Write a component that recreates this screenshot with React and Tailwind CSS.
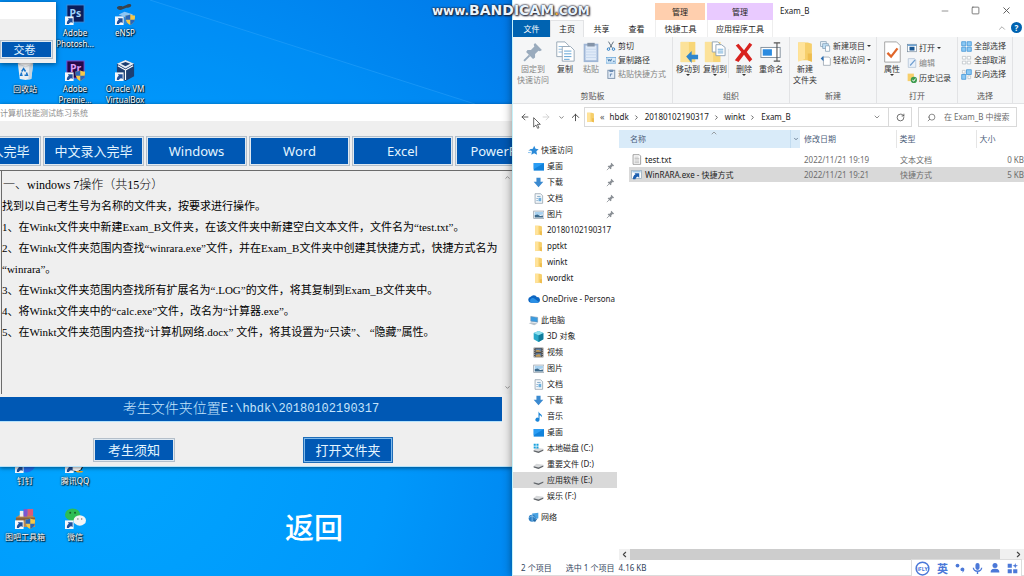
import { useState } from 'react'
import clsx from 'clsx'
import {
  ArrowLeft, ArrowRight, ArrowUp, ChevronDown, ChevronLeft, ChevronRight, ChevronUp,
  Minus, RotateCw, Search, Square, X
} from 'lucide-react'

const UI_FONT = "font-['Noto_Sans','Noto_Sans_CJK_SC',sans-serif]"

/* ---------- 图标 ---------- */

function Svg({ size = 'size-[11px]', box = 16, children }) {
  return (
    <svg viewBox={`0 0 ${box} ${box}`} className={clsx(size, 'shrink-0')} fill="none" aria-hidden="true">
      {children}
    </svg>
  )
}

const FolderIcon = ({ size }) => (
  <Svg size={size}>
    <path d="M3 1h7l3 1v13l-3-1H3z" fill="#f6cf6b" />
    <path d="M3 1h5v12l-5 2z" fill="#ffe39a" />
    <path d="M10 9h3v6l-3-1z" fill="#eebd4f" />
  </Svg>
)

const PinIcon = ({ size, color = '#8b9096' }) => (
  <Svg size={size}>
    <path d="M9.5 1.5 14.5 6.5 13 7.5 12 7 9.5 9.5 9.5 12 8 13 3 8 4 6.5 6.5 6.5 9 4 8.5 2.8z" fill={color} />
    <path d="M5.5 10.5 1.5 14.5" stroke={color} strokeWidth="1.4" />
  </Svg>
)

const StarIcon = () => (
  <Svg>
    <path d="M9 1l2 4.5 4.5.5-3.3 3 1 5L9 12l-4.2 2.3.9-4.8L2 6l5-.5z" fill="#2b8ad8" />
    <path d="M1 8h4M0 11h4" stroke="#74b6e8" strokeWidth="1.2" />
  </Svg>
)

const DesktopIcon = () => (
  <Svg>
    <rect x="1" y="3" width="15" height="11" fill="#1283dc" />
    <path d="M1 3h15L1 12z" fill="#2a9df4" />
  </Svg>
)

const DownIcon = () => (
  <Svg>
    <path d="M5 1h6v6h4l-7 8-7-8h4z" fill="#3b8ad0" />
  </Svg>
)

const DocIcon = () => (
  <Svg>
    <path d="M3 1h8l3 3v11H3z" fill="#f4f7fa" stroke="#8897a5" />
    <path d="M6 5h5M5 8h2M5 11h2" stroke="#5b8cb5" />
    <rect x="8" y="7" width="4" height="5" fill="#6aaede" />
  </Svg>
)

const PictureIcon = () => (
  <Svg>
    <rect x="1" y="3" width="15" height="11" fill="#f5f8fa" stroke="#8d9aa6" />
    <path d="M2.5 4.500h12V8l-12 2z" fill="#a9d2f0" />
    <path d="M2.500 12.500V9l4-1 4 2 4-.5v3z" fill="#3c6a8c" />
  </Svg>
)

const CloudIcon = () => (
  <Svg size="size-[12px]">
    <path d="M4 13a4 4 0 0 1-.5-7.900A5 5 0 0 1 12 5.500 3.800 3.800 0 0 1 13 13z" fill="#0d66c2" />
    <path d="M4 13a3.500 3.500 0 0 1 1-6c3-1 5 2 9.500 5-.4.6-1 1-1.500 1z" fill="#2a90e6" />
  </Svg>
)

const PcIcon = () => (
  <Svg>
    <path d="M4 2l10 1.500v7L4 9z" fill="#3a9be0" stroke="#6f8ea8" strokeWidth=".8" />
    <path d="M1 12l4-1.500 9 2-5 2.500z" fill="#b9c3cc" />
  </Svg>
)

const CubeIcon = () => (
  <Svg>
    <path d="M8 0l7 3v9l-7 4-7-4V3z" fill="#29a9c9" />
    <path d="M8 6l7-3v9l-7 4z" fill="#127c9b" />
    <path d="M1 3l7-3 7 3-7 3z" fill="#8fe0ee" />
  </Svg>
)

const VideoIcon = () => (
  <Svg>
    <rect x="1" y="1" width="14" height="14" fill="#4a4a4a" />
    <path d="M2.500 1v14M13.500 1v14" stroke="#ddd" strokeWidth="1.200" strokeDasharray="1.500 1.500" />
    <path d="M4 2h8v5H4zM4 9h8v5H4z" fill="#5d7fa6" />
    <path d="M4 5l4-1 4 3H4zM4 12l5-2 3 4H4z" fill="#c49a55" />
  </Svg>
)

const MusicIcon = () => (
  <Svg>
    <path d="M8 0c0 4 6 4 5 9-.8-2-2-3-3.500-3v6.500A3 3 0 1 1 8 10z" fill="#1a85d8" />
  </Svg>
)

const DriveIcon = ({ system }) => (
  <Svg>
    <path d="M1 10l4-3 10 1.500v2L8 14 1 12z" fill="#d7d9db" />
    <path d="M1 10.500l7 2 7-3v1.800L8 14.500 1 12.500z" fill="#63676b" />
    {system && <path d="M1 1h3v3H1zM5 1h3v3H5zM1 5h3v3H1zM5 5h3v3H5z" fill="#17a0dd" />}
  </Svg>
)

const NetworkIcon = () => (
  <Svg>
    <path d="M6 2l9-1v8l-8 2z" fill="#4aa3e2" />
    <circle cx="6" cy="9" r="5" fill="#2d7fc4" />
    <path d="M2 8c3-3 5-2 8 0M6 4v10" stroke="#9fd1f4" />
    <path d="M8 12l6-3-4 6z" fill="#2268a5" />
  </Svg>
)

const TextFileIcon = () => (
  <Svg>
    <path d="M3 1h9l2 2v12H3z" fill="#fff" stroke="#777" />
    <path d="M5 4.500h6M5 6.500h7M5 8.500h7M5 10.500h7M5 12.500h7" stroke="#999" strokeWidth=".8" />
  </Svg>
)

const LinkFileIcon = () => (
  <Svg>
    <rect x="1" y="2" width="14" height="12" fill="#fff" stroke="#8aa4b8" />
    <path d="M2 3h12v2H2z" fill="#9cc4e4" />
    <path d="M3 15c-.5-4 1-6 3.500-7.500L5 6h7v7l-2-2c-2 1-3 2-3.500 4z" fill="#1c5fb0" />
  </Svg>
)

/* 功能区大图标 */

const CopyIcon = () => (
  <Svg size="size-[22px]" box={24}>
    <path d="M3 1h9l4 4v12H3z" fill="#fff" stroke="#95a5b5" />
    <path d="M5 6h7M5 9h7M5 12h7" stroke="#86b5da" />
    <path d="M9 6h9l4 4v12H9z" fill="#fff" stroke="#95a5b5" />
    <path d="M11 11h8M11 14h8M11 17h8M11 20h6" stroke="#579dd1" />
  </Svg>
)

const PasteIcon = () => (
  <Svg size="size-[22px]" box={24}>
    <rect x="4" y="3" width="16" height="20" fill="#9fb6d6" />
    <rect x="6" y="5" width="12" height="16" fill="#dfeaf8" />
    <path d="M6 9h12M6 12h12M6 15h12M6 18h12" stroke="#c5d7ee" />
    <path d="M8 2h8v4H8z" fill="#8494a8" />
  </Svg>
)

const MoveToIcon = () => (
  <Svg size="size-[22px]" box={24}>
    <path d="M4 1h16v22H4z" fill="#f8d677" />
    <path d="M4 1h9v22H4z" fill="#fce29a" />
    <path d="M10 17l6-6v4h7v5h-7v4z" fill="#2f86cd" />
  </Svg>
)

const CopyToIcon = () => (
  <Svg size="size-[22px]" box={24}>
    <path d="M1 1h17v22H1z" fill="#f8d677" />
    <path d="M1 1h9v22H1z" fill="#fce29a" />
    <path d="M9 1h6l3 3v8H9z" fill="#fff" stroke="#8ea2b5" />
    <path d="M13 4h6l4 3v9H13z" fill="#fff" stroke="#8ea2b5" />
    <path d="M15 9h6M15 11h6M15 13h6" stroke="#6aa9d8" />
  </Svg>
)

const DeleteIcon = () => (
  <Svg size="size-[22px]" box={24}>
    <path d="M3 5l3-2 6 7 6-8 3 2-6 8 6 8-3 3-6-8-6 8-4-2 7-9z" fill="#d8231f" />
  </Svg>
)

const RenameIcon = () => (
  <Svg size="size-[22px]" box={24}>
    <rect x="1" y="7" width="21" height="11" fill="#fff" stroke="#7f8d99" />
    <rect x="3" y="9" width="10" height="7" fill="#2b8be0" />
    <path d="M15 2h7M15 22h7M18.500 2v20" stroke="#555" strokeWidth="1.200" />
  </Svg>
)

const PropertiesIcon = () => (
  <Svg size="size-[22px]" box={24}>
    <path d="M4 1h13l4 4v18H4z" fill="#fff" stroke="#a0a0a0" />
    <path d="M7 13l4 4 7-9" stroke="#e0662a" strokeWidth="2.500" />
  </Svg>
)

/* 功能区小图标 */

const CutIcon = () => (
  <Svg size="size-[10px]">
    <path d="M4 1l6 10M12 1L6 11" stroke="#5b6b7a" strokeWidth="1.500" />
    <circle cx="4" cy="13" r="2" stroke="#2479c2" strokeWidth="1.500" />
    <circle cx="12" cy="13" r="2" stroke="#2479c2" strokeWidth="1.500" />
  </Svg>
)

const PathIcon = () => (
  <Svg size="size-[10px]">
    <rect x="0" y="4" width="16" height="9" fill="#d8ebfa" stroke="#4d94cf" />
    <path d="M3 6l1.500 4L6 7l1.500 3L9 6M11 10h3" stroke="#245e96" strokeWidth="1.200" />
  </Svg>
)

const PasteLinkIcon = () => (
  <Svg size="size-[10px]">
    <rect x="3" y="2" width="11" height="13" fill="#e4edf8" stroke="#7d93ac" strokeWidth="1.500" />
    <path d="M7 12V8h3M6 2h5v2H6z" stroke="#5f83ae" strokeWidth="1.500" />
  </Svg>
)

const NewItemIcon = () => (
  <Svg size="size-[11px]">
    <rect x="1" y="1" width="8" height="7" fill="#e8f1f8" stroke="#7b98b0" />
    <rect x="4" y="4" width="8" height="7" fill="#bfe0f5" stroke="#7b98b0" />
    <path d="M8 7h6v8H8z" fill="#fff" stroke="#7b98b0" />
  </Svg>
)

const EasyAccessIcon = () => (
  <Svg size="size-[11px]">
    <path d="M5 3h8l2 2v10H5z" fill="#fff" stroke="#8a97a3" />
    <path d="M1 5l4-4v8z" fill="#2b6fb5" />
  </Svg>
)

const OpenIcon = () => (
  <Svg size="size-[10px]">
    <rect x="1" y="2" width="14" height="12" fill="#fff" stroke="#6a7f92" />
    <path d="M1 3.500h14" stroke="#4f91cc" strokeWidth="2" />
    <rect x="4" y="6" width="8" height="6" fill="#1a5792" />
  </Svg>
)

const EditIcon = () => (
  <Svg size="size-[10px]">
    <path d="M2 1h10l2 2v12H2z" fill="#e9f1fa" stroke="#a4b7cb" />
    <path d="M5 12L13 3" stroke="#6f9ed0" strokeWidth="2" />
  </Svg>
)

const HistoryIcon = () => (
  <Svg size="size-[10px]">
    <path d="M1 1h10v12H1z" fill="#f6cf6b" />
    <circle cx="11" cy="11" r="5" fill="#3e9b4f" />
    <path d="M8.500 11.500L11 13l2.500-4" stroke="#fff" strokeWidth="1.500" />
  </Svg>
)

const SelectAllIcon = () => (
  <Svg size="size-[11px]">
    <path d="M1 1h6v6H1zM9 1h6v6H9zM1 9h6v6H1zM9 9h6v6H9z" fill="#8dc9f4" stroke="#2f8ad2" />
  </Svg>
)

const SelectNoneIcon = () => (
  <Svg size="size-[11px]">
    <path d="M2 2h5v4H2zM9 2h5v4H9zM2 9h5v4H2zM9 9h5v4H9z" fill="#fff" stroke="#b5bbc1" />
  </Svg>
)

const InvertIcon = () => (
  <Svg size="size-[11px]">
    <path d="M8 1h7v7H8zM1 8h6v7H1z" fill="#8dc9f4" stroke="#2f8ad2" />
    <path d="M2 2h4v4H2zM10 10h4v4h-4z" fill="#fff" stroke="#b5bbc1" />
  </Svg>
)

/* 桌面图标 */

const ShortcutArrow = () => (
  <>
    <rect x="0" y="13" width="9" height="9" fill="#f4f8fc" />
    <path d="M2 21c-.3-2 .5-3.500 2-4.500L3 15h5v5l-1.500-1C5 19.500 4.500 20 4 21z" fill="#1f4f9a" />
  </>
)

const Shield = () => (
  <>
    <path d="M16 11c2 1 3 1 5 1 0 5-1 8-5 10-4-2-5-5-5-10 2 0 3 0 5-1z" fill="#f4c84a" />
    <path d="M16 11c-2 1-3 1-5 1v4.500h5zM16 16.500h4.800c-.5 2.500-2 4.200-4.800 5.500z" fill="#2b66b8" />
  </>
)

const PhotoshopIcon = () => (
  <Svg size="size-[21px]" box={22}>
    <rect x="2" y="1" width="18" height="18" fill="#0a1d5c" stroke="#3b8fe0" />
    <text x="11" y="14" textAnchor="middle" fontSize="11" fontWeight="700" fill="#9cd2fb">Ps</text>
    <ShortcutArrow />
  </Svg>
)

const PremiereIcon = () => (
  <Svg size="size-[21px]" box={22}>
    <rect x="2" y="1" width="18" height="18" fill="#25084a" stroke="#7c4fd0" />
    <text x="11" y="13" textAnchor="middle" fontSize="11" fontWeight="700" fill="#dd9bf7">Pr</text>
    <Shield />
    <ShortcutArrow />
  </Svg>
)

const EnspIcon = () => (
  <Svg size="size-[21px]" box={22}>
    <path d="M2 4c0-2 4-2.500 6-1.500L12 1c2-1.500 5-1 5 .5S14 4 12 4L8 5.500C6 7 2 6 2 4z" fill="#39424c" />
    <path d="M4 11l6-3 9 3v6l-8 4-7-4z" fill="#2f8bdc" />
    <path d="M4 11l6-3 9 3-8 3z" fill="#8cc6f5" />
    <Shield />
    <ShortcutArrow />
  </Svg>
)

const RecycleIcon = () => (
  <Svg size="size-[21px]" box={22}>
    <path d="M3 4l8-3 8 3-2 16-6 1-6-1z" fill="#e8eef3" />
    <path d="M3 4l8-3 8 3-8 3z" fill="#fff" stroke="#c3ced8" strokeWidth=".6" />
    <path d="M15 6l4-2-2 16-3 .5z" fill="#c8d4de" />
    <path d="M7 12l2-3 2 3M12 13l1 3H10M8 16H6l1-3" stroke="#1673c9" strokeWidth="1.600" />
  </Svg>
)

const VirtualBoxIcon = () => (
  <Svg size="size-[21px]" box={22}>
    <path d="M11 0l9 4v13l-9 5-9-5V4z" fill="#1d3f72" />
    <path d="M11 0l9 4-9 5-9-5z" fill="#e7eef6" />
    <path d="M11 2l5 2-5 2.500L6 4z" fill="#1d3f72" />
    <path d="M3 6l8 4.500V21M19 6l-8 4.500" stroke="#fff" strokeWidth="1.200" />
    <ShortcutArrow />
  </Svg>
)

const DingIcon = () => (
  <Svg size="size-[21px]" box={22}>
    <circle cx="12" cy="12" r="9.500" fill="#1f6ff0" />
    <path d="M6 5l10 4-4 5 1-3-5-2z" fill="#fff" />
    <ShortcutArrow />
  </Svg>
)

const QqIcon = () => (
  <Svg size="size-[21px]" box={22}>
    <ellipse cx="12" cy="11" rx="8" ry="10" fill="#15181c" />
    <ellipse cx="12" cy="14" rx="6" ry="6" fill="#fff" />
    <path d="M11 20h8l-1 1.500h-5z" fill="#f0a51e" />
    <ShortcutArrow />
  </Svg>
)

const ToolboxIcon = () => (
  <Svg size="size-[21px]" box={22}>
    <path d="M1 10l4-3h12l4 3v10H1z" fill="#b98a55" />
    <path d="M1 10h20v3H1z" fill="#8b6238" />
    <path d="M5 3h4v6H5z" fill="#eee" />
    <path d="M9 1h4v8H9z" fill="#8055cf" />
    <path d="M13 1h6v7h-6z" fill="#dc5b78" />
    <Shield />
    <ShortcutArrow />
  </Svg>
)

const WechatIcon = () => (
  <Svg size="size-[21px]" box={22}>
    <ellipse cx="8" cy="7" rx="8" ry="6.500" fill="#2dbd55" />
    <circle cx="5.500" cy="5" r="1" fill="#115f28" />
    <circle cx="10.500" cy="5" r="1" fill="#115f28" />
    <ellipse cx="15.500" cy="13" rx="6.500" ry="5.500" fill="#f2f4f5" />
    <circle cx="13.500" cy="11.500" r=".8" fill="#777" />
    <circle cx="17.500" cy="11.500" r=".8" fill="#777" />
    <ShortcutArrow />
  </Svg>
)

/* ---------- 桌面 ---------- */

const desktopIcons = [
  { lines: ['Adobe', 'Photosh...'], icon: PhotoshopIcon, place: 'col-start-2 row-start-1' },
  { lines: ['eNSP'], icon: EnspIcon, place: 'col-start-3 row-start-1' },
  { lines: ['回收站'], icon: RecycleIcon, place: 'col-start-1 row-start-2' },
  { lines: ['Adobe', 'Premie...'], icon: PremiereIcon, place: 'col-start-2 row-start-2' },
  { lines: ['Oracle VM', 'VirtualBox'], icon: VirtualBoxIcon, place: 'col-start-3 row-start-2' },
  { lines: ['钉钉'], icon: DingIcon, place: 'col-start-1 row-start-9' },
  { lines: ['腾讯QQ'], icon: QqIcon, place: 'col-start-2 row-start-9' },
  { lines: ['图吧工具箱'], icon: ToolboxIcon, place: 'col-start-1 row-start-10' },
  { lines: ['微信'], icon: WechatIcon, place: 'col-start-2 row-start-10' }
]

function DesktopIcons() {
  return (
    <div className="grid grid-cols-[repeat(3,50px)] grid-rows-[repeat(10,56px)] pt-1">
      {desktopIcons.map(({ lines, icon: Icon, place }) => (
        <button key={lines.join('')} className={clsx('flex flex-col items-center gap-[2px]', place)}>
          <Icon />
          <span className="whitespace-nowrap text-[8px] leading-[11px] text-white [text-shadow:0_0_2px_#000,1px_1px_1px_#000]">
            {lines.map((line) => <span key={line} className="block">{line}</span>)}
          </span>
        </button>
      ))}
    </div>
  )
}

/* ---------- 考试窗口 ---------- */

const examTabs = ['英文录入完毕', '中文录入完毕', 'Windows', 'Word', 'Excel', 'PowerPoint']

const questions = [
  '找到以自己考生号为名称的文件夹，按要求进行操作。',
  '1、在Winkt文件夹中新建Exam_B文件夹，在该文件夹中新建空白文本文件，文件名为“test.txt”。',
  '2、在Winkt文件夹范围内查找“winrara.exe”文件，并在Exam_B文件夹中创建其快捷方式，快捷方式名为\n“winrara”。',
  '3、在Winkt文件夹范围内查找所有扩展名为“.LOG”的文件，将其复制到Exam_B文件夹中。',
  '4、将Winkt文件夹中的“calc.exe”文件，改名为“计算器.exe”。',
  '5、在Winkt文件夹范围内查找“计算机网络.docx” 文件，将其设置为“只读”、 “隐藏”属性。'
]

const BLUE_BUTTON = 'border border-[#b4bfca] bg-[#0058b4] text-[#e4f5ff] outline-1 -outline-offset-2 outline-[#dfe9f2]'

function SubmitWindow() {
  return (
    <section className="absolute left-0 top-[2px] w-14 bg-[#efefef] pb-[3px] shadow-[0_1px_5px_rgba(0,0,0,0.5)]">
      <div className="h-[17px] bg-white" />
      <div className="pr-[3px] pt-[17px]">
        <button className={clsx('h-[19px] w-full pr-1 text-[11px] leading-[13px]', BLUE_BUTTON)}>交卷</button>
      </div>
    </section>
  )
}

function ExamWindow() {
  const [tab, setTab] = useState('Windows')

  return (
    <section className="absolute inset-x-0 top-[104px] overflow-hidden border-b border-[#b5e2fb] bg-[#efefef] shadow-[0_1px_4px_rgba(0,0,0,0.5)]">
      <h1 className="h-[17px] bg-white text-[8px] leading-[17px] text-[#909090]">计算机技能测试练习系统</h1>

      {/* 科目标签 */}
      <nav className="-ml-[60px] flex gap-[2px] pt-[15px]">
        {examTabs.map((name) => (
          <button
            key={name}
            onClick={() => setTab(name)}
            aria-pressed={tab === name}
            className={clsx('h-[30px] w-[101px] shrink-0 text-[13px] leading-[26px]', BLUE_BUTTON)}
          >
            {name}
          </button>
        ))}
      </nav>

      {/* 题目 */}
      <div className="mt-1 flex h-[224px] border-t border-[#6b6b6b]">
        <article className="ml-px min-w-0 flex-1 border-l border-[#6b6b6b] pt-1 font-['Liberation_Serif','Noto_Sans_CJK_SC',serif] text-[11px] leading-[21px] text-black">
          <h2 className="pl-px text-[12px] font-light">一、windows 7操作（共15分）</h2>
          {questions.map((text) => <p key={text} className="whitespace-pre-line font-normal">{text}</p>)}
        </article>
        <div className="flex w-[10px] flex-col items-center justify-between bg-[#ededed] py-[3px] text-[#8a8a8a]">
          <ChevronUp className="size-[7px]" strokeWidth={3} />
          <ChevronDown className="size-[7px]" strokeWidth={3} />
        </div>
      </div>

      <p className="mr-[10px] mt-[3px] flex h-[25px] items-center justify-center border-b border-[#b5e2fb] bg-[#0058b4] font-['Liberation_Mono','Noto_Sans_CJK_SC',monospace] text-[12px] font-light text-[#c4e4fb]">
        <span className="text-[14px]">考生文件夹位置</span>E:\hbdk\20180102190317
      </p>

      <div className="flex items-center pb-[3px] pl-[93px] pt-[15px]">
        <button className={clsx('h-6 w-[82px] text-[13px] leading-5', BLUE_BUTTON)}>考生须知</button>
        <button className="ml-32 h-[26px] w-[90px] border border-[#1f6db8] bg-[#0058b4] text-[13px] leading-5 text-[#e4f5ff] outline-1 -outline-offset-2 outline-[#7fb9ea]">
          打开文件夹
        </button>
      </div>
    </section>
  )
}

function Desktop() {
  return (
    <main className="relative w-1/2 overflow-hidden bg-[radial-gradient(ellipse_at_20%_75%,#00a6ff_0%,#0098fb_50%,#0078e8_100%)]">
      <svg viewBox="0 0 512 104" className="absolute inset-x-0 top-0 h-[104px] w-full" preserveAspectRatio="none" aria-hidden="true">
        <path d="M150 0 475 104H0V0z" fill="#009bff" opacity=".18" />
        <path d="M150 0 475 104" stroke="#3fb0ff" strokeWidth="1" opacity=".35" />
      </svg>
      <div className="relative"><DesktopIcons /></div>
      <SubmitWindow />
      <ExamWindow />
      <button className="absolute left-[285px] top-[508px] text-[29px] font-medium leading-10 text-white">返回</button>
    </main>
  )
}

/* ---------- 资源管理器 ---------- */

function BigButton({ icon, lines, width, disabled, menu }) {
  return (
    <button className={clsx('flex shrink-0 flex-col items-center pt-1', width, disabled ? 'text-[#858585]' : 'text-[#333]')}>
      {icon}
      {lines.map((line) => <span key={line} className="whitespace-nowrap leading-[11px]">{line}</span>)}
      {menu && <Caret />}
    </button>
  )
}

const Caret = () => (
  <svg viewBox="0 0 4 2" className="h-[2px] w-1 shrink-0" aria-hidden="true"><path d="M0 0h4L2 2z" fill="#333" /></svg>
)

function SmallButton({ icon: Icon, label, disabled, menu, tall }) {
  return (
    <button className={clsx('flex items-center gap-[2px] whitespace-nowrap', tall ? 'h-[15px]' : 'h-[14px]', disabled ? 'text-[#858585]' : 'text-[#333]')}>
      <Icon />
      {label}
      {menu && <Caret />}
    </button>
  )
}

function RibbonGroup({ label, width, children }) {
  return (
    <div className={clsx('flex shrink-0 flex-col border-r border-[#e2e3e5]', width)}>
      <div className="flex h-[53px]">{children}</div>
      <div className="pb-[2px] text-center leading-[11px] text-[#555]">{label}</div>
    </div>
  )
}

function Ribbon() {
  return (
    <div className="flex overflow-hidden border-b border-[#e2e3e5] bg-[#f5f6f7]">
      <RibbonGroup label="剪贴板" width="w-[160px]">
        <BigButton width="w-10" icon={<PinIcon size="size-[22px]" color="#9aabbd" />} lines={['固定到', '快速访问']} disabled />
        <BigButton width="w-6" icon={<CopyIcon />} lines={['复制']} />
        <BigButton width="w-7" icon={<PasteIcon />} lines={['粘贴']} disabled />
        <div className="pl-px pt-[2px]">
          <SmallButton icon={CutIcon} label="剪切" />
          <SmallButton icon={PathIcon} label="复制路径" />
          <SmallButton icon={PasteLinkIcon} label="粘贴快捷方式" disabled />
        </div>
      </RibbonGroup>
      <RibbonGroup label="组织" width="w-[117px]">
        <BigButton width="w-[30px]" icon={<MoveToIcon />} lines={['移动到']} menu />
        <BigButton width="w-[24px]" icon={<CopyToIcon />} lines={['复制到']} menu />
        <div className="mx-px my-3 border-l border-[#e2e3e5]" />
        <BigButton width="w-[28px]" icon={<DeleteIcon />} lines={['删除']} menu />
        <BigButton width="w-[26px]" icon={<RenameIcon />} lines={['重命名']} />
      </RibbonGroup>
      <RibbonGroup label="新建" width="w-[87px]">
        <BigButton width="w-[30px]" icon={<FolderIcon size="size-[22px]" />} lines={['新建', '文件夹']} />
        <div className="pt-[2px]">
          <SmallButton icon={NewItemIcon} label="新建项目" menu />
          <SmallButton icon={EasyAccessIcon} label="轻松访问" menu />
        </div>
      </RibbonGroup>
      <RibbonGroup label="打开" width="w-[81px]">
        <BigButton width="w-[30px]" icon={<PropertiesIcon />} lines={['属性']} menu />
        <div className="pt-[3px]">
          <SmallButton icon={OpenIcon} label="打开" menu tall />
          <SmallButton icon={EditIcon} label="编辑" disabled tall />
          <SmallButton icon={HistoryIcon} label="历史记录" tall />
        </div>
      </RibbonGroup>
      <RibbonGroup label="选择" width="w-[55px]">
        <div className="pl-[3px] pt-[2px]">
          <SmallButton icon={SelectAllIcon} label="全部选择" />
          <SmallButton icon={SelectNoneIcon} label="全部取消" />
          <SmallButton icon={InvertIcon} label="反向选择" />
        </div>
      </RibbonGroup>
    </div>
  )
}

function TitleBar() {
  return (
    <header className="flex h-[37px]">
      <button className="h-[17px] w-[37px] shrink-0 self-end bg-[#0063b1] text-white">文件</button>
      <button className="h-[17px] w-[34px] shrink-0 self-end border-x border-t border-[#e2e3e5] bg-[#f5f6f7]">主页</button>
      <button className="h-[17px] w-[35px] shrink-0 self-end">共享</button>
      <button className="h-[17px] w-[35px] shrink-0 self-end">查看</button>
      <div className="ml-px w-[50px] shrink-0 pt-[3px] text-center">
        <div className="h-[17px] bg-[#ffcfae] leading-[17px]">管理</div>
        <button className="h-[17px] w-full border-l border-[#eee]">快捷工具</button>
      </div>
      <div className="ml-[2px] w-[66px] shrink-0 pt-[3px] text-center">
        <div className="h-[17px] bg-[#e9caff] leading-[17px]">管理</div>
        <button className="h-[17px] w-full border-x border-[#eee]">应用程序工具</button>
      </div>
      <h1 className="flex-1 pl-[7px] leading-[21px]">Exam_B</h1>
      <div className="flex flex-col items-end text-[#555]">
        <div className="flex h-[21px] items-center gap-[21px] pr-3">
          <button aria-label="最小化"><Minus className="size-[10px]" strokeWidth={1.5} /></button>
          <button aria-label="最大化"><Square className="size-[9px]" strokeWidth={2} /></button>
          <button aria-label="关闭"><X className="size-[11px]" strokeWidth={2} /></button>
        </div>
        <div className="flex items-center gap-1 pr-[2px] pt-px">
          <button aria-label="折叠功能区"><ChevronUp className="size-[10px] text-[#999]" strokeWidth={2} /></button>
          <button className="size-[11px] rounded-full bg-[#0063b1] text-[8px] font-bold leading-[11px] text-white">?</button>
        </div>
      </div>
    </header>
  )
}

const crumbs = ['hbdk', '20180102190317', 'winkt', 'Exam_B']

function AddressBar() {
  return (
    <div className="flex h-[26px] items-center pl-[7px] pr-[7px] text-[#222]">
      <button aria-label="后退"><ArrowLeft className="size-[10px] text-[#444]" strokeWidth={2} /></button>
      <button aria-label="前进" className="ml-[11px]"><ArrowRight className="size-[10px] text-[#ccc]" strokeWidth={2} /></button>
      <button aria-label="最近位置" className="ml-[7px]"><ChevronDown className="size-[7px] text-[#777]" strokeWidth={3} /></button>
      <button aria-label="上移" className="ml-[5px]"><ArrowUp className="size-[11px] text-[#444]" strokeWidth={2} /></button>
      <div className="ml-[3px] flex h-5 min-w-0 flex-1 items-center border border-[#d9d9d9]">
        <FolderIcon />
        <span className="ml-1 text-[9px] text-[#555]">«</span>
        <div className="ml-[5px] flex flex-1 items-center">
          {crumbs.map((name, index) => (
            <span key={name} className="flex items-center">
              {index > 0 && <ChevronRight className="ml-1 mr-[5px] size-[7px] text-[#555]" strokeWidth={3} />}
              <button>{name}</button>
            </span>
          ))}
        </div>
        <ChevronDown className="mr-[7px] size-[8px] text-[#555]" />
        <button aria-label="刷新" className="flex h-full w-[23px] items-center justify-center border-l border-[#d9d9d9]">
          <RotateCw className="size-[9px] text-[#444]" />
        </button>
      </div>
      <label className="ml-[6px] flex h-5 w-[99px] items-center gap-2 border border-[#d9d9d9] pl-2">
        <Search className="size-[9px] shrink-0 -scale-x-100 text-[#666]" strokeWidth={2} />
        <input aria-label="搜索" placeholder="在 Exam_B 中搜索" className="w-full min-w-0 outline-none placeholder:text-[#6d6d6d]" />
      </label>
    </div>
  )
}

const navGroups = [
  {
    label: '快速访问', icon: StarIcon, items: [
      { label: '桌面', icon: DesktopIcon, pinned: true },
      { label: '下载', icon: DownIcon, pinned: true },
      { label: '文档', icon: DocIcon, pinned: true },
      { label: '图片', icon: PictureIcon, pinned: true },
      { label: '20180102190317', icon: FolderIcon },
      { label: 'pptkt', icon: FolderIcon },
      { label: 'winkt', icon: FolderIcon },
      { label: 'wordkt', icon: FolderIcon }
    ]
  },
  { label: 'OneDrive - Persona', icon: CloudIcon, items: [] },
  {
    label: '此电脑', icon: PcIcon, items: [
      { label: '3D 对象', icon: CubeIcon },
      { label: '视频', icon: VideoIcon },
      { label: '图片', icon: PictureIcon },
      { label: '文档', icon: DocIcon },
      { label: '下载', icon: DownIcon },
      { label: '音乐', icon: MusicIcon },
      { label: '桌面', icon: DesktopIcon },
      { label: '本地磁盘 (C:)', icon: () => <DriveIcon system /> },
      { label: '重要文件 (D:)', icon: DriveIcon },
      { label: '应用软件 (E:)', icon: DriveIcon, selected: true },
      { label: '娱乐 (F:)', icon: DriveIcon }
    ]
  },
  { label: '网络', icon: NetworkIcon, items: [] }
]

function NavPane() {
  return (
    <nav className="flex w-[104px] shrink-0 flex-col gap-[5px] overflow-hidden pt-3">
      {navGroups.map(({ label, icon: Icon, items }) => (
        <div key={label}>
          <button className="flex h-4 w-full items-center gap-[2px] whitespace-nowrap pl-[15px]">
            <Icon />{label}
          </button>
          {items.map(({ label: name, icon: ItemIcon, pinned, selected }) => (
            <button
              key={name}
              className={clsx('flex h-4 w-full items-center gap-[3px] whitespace-nowrap pl-5 pr-[2px]', selected && 'bg-[#d9d9d9]')}
            >
              <ItemIcon />
              {name}
              {pinned && <span className="ml-auto"><PinIcon size="size-[9px]" /></span>}
            </button>
          ))}
        </div>
      ))}
    </nav>
  )
}

const files = [
  { name: 'test.txt', icon: TextFileIcon, date: '2022/11/21 19:19', type: '文本文档', size: '0 KB' },
  { name: 'WinRARA.exe - 快捷方式', icon: LinkFileIcon, date: '2022/11/21 19:21', type: '快捷方式', size: '5 KB' }
]

function FileList() {
  const [selected, setSelected] = useState('WinRARA.exe - 快捷方式')

  return (
    <div className="flex min-w-0 flex-1 flex-col overflow-hidden pl-[2px]">
      <table className="w-[calc(100%+5px)] table-fixed border-collapse text-left text-[#6d6d6d]">
        <colgroup>
          <col className="w-[10px]" />
          <col />
          <col className="w-24" />
          <col className="w-20" />
          <col className="w-[53px]" />
        </colgroup>
        <thead>
          <tr className="h-[18px] text-[#4c607a] *:font-normal">
            <th colSpan={2} className="bg-[#d9ebf9] pl-[11px]">
              <div className="relative flex items-center justify-between">
                名称
                <ChevronUp className="absolute -top-px left-20 size-[8px] text-[#777]" />
                <span className="flex h-[18px] w-[10px] items-center justify-center border-l border-[#c3dcf0]">
                  <ChevronDown className="size-[6px]" strokeWidth={3} />
                </span>
              </div>
            </th>
            <th className="pl-1">修改日期</th>
            <th className="border-l border-[#e5e5e5] pl-[3px]">类型</th>
            <th className="border-l border-[#e5e5e5] pl-[3px]">大小</th>
          </tr>
        </thead>
        <tbody>
          <tr className="h-1"><td colSpan={5} /></tr>
          {files.map(({ name, icon: Icon, date, type, size }) => (
            <tr key={name} onClick={() => setSelected(name)} className={clsx('h-[15px]', selected === name && '*:not-first:bg-[#d9d9d9]')}>
              <td />
              <td className="text-[#222]">
                <div className="flex items-center gap-[3px] pl-[2px]"><Icon />{name}</div>
              </td>
              <td className="pl-1">{date}</td>
              <td className="pl-1">{type}</td>
              <td className="pr-[5px] text-right">{size}</td>
            </tr>
          ))}
        </tbody>
      </table>
      <div className="mt-auto flex h-[11px] items-center justify-between bg-[#f0f0f0] text-[#444]">
        <ChevronLeft className="mx-px size-[9px]" strokeWidth={3} />
        <div className="h-full flex-1 bg-[#cdcdcd]" />
        <ChevronRight className="ml-[14px] mr-px size-[9px]" strokeWidth={3} />
      </div>
    </div>
  )
}

/* 输入法工具栏 */
function ImeBar() {
  return (
    <div className="absolute bottom-0 right-[2px] flex h-[17px] items-center gap-[7px] border-x border-t border-[#dcdcdc] bg-white px-[3px] text-[#4b78d8]">
      <Svg size="size-[15px]" box={20}>
        <circle cx="10" cy="10" r="8.500" stroke="#4b78d8" strokeWidth="2" />
        <text x="10" y="13" textAnchor="middle" fontSize="7" fontWeight="700" fill="#4b78d8">iFLY</text>
      </Svg>
      <button className="text-[11px] font-bold leading-[15px]">英</button>
      <Svg size="size-[10px]">
        <circle cx="4" cy="4" r="3" fill="#4b78d8" />
        <path d="M10 8a3 3 0 0 1 5 2c0 3-2 5-4 5 1-1 1.500-2 1.500-2.500A2.500 2.500 0 0 1 10 8z" fill="#4b78d8" />
      </Svg>
      <Svg size="size-[11px]">
        <rect x="5" y="0" width="6" height="10" rx="3" fill="#4b78d8" />
        <path d="M2 7a6 5 0 0 0 12 0M8 12v4" stroke="#4b78d8" strokeWidth="2" />
      </Svg>
      <Svg size="size-[10px]">
        <circle cx="8" cy="4" r="4" fill="#4b78d8" />
        <path d="M1 15c0-5 3-6 7-6s7 1 7 6z" fill="#4b78d8" />
      </Svg>
      <Svg size="size-[11px]">
        <path d="M1 1h6v6H1zM1 9h6v6H1zM9 9h6v6H9zM12 0l1 3 3 1-3 1-1 3-1-3-3-1 3-1z" fill="#4b78d8" />
      </Svg>
    </div>
  )
}

function Explorer() {
  return (
    <section className="relative flex w-1/2 flex-col border-l border-[#c5f3fb] bg-white text-[8px] leading-[12px] text-[#222] shadow-[0_0_9px_rgba(0,0,0,0.45)]">
      <TitleBar />
      <Ribbon />
      <AddressBar />
      <div className="flex flex-1">
        <NavPane />
        <FileList />
      </div>
      <footer className="flex h-4 items-center border-b border-[#dcdcdc] pl-2 text-[#31455c]">
        <span className="pr-[14px]">2 个项目</span>
        <span className="pr-1">选中 1 个项目</span>
        <span>4.16 KB</span>
      </footer>
      <ImeBar />
    </section>
  )
}

export default function App() {
  return (
    <div className={clsx('relative flex min-h-screen w-full overflow-hidden', UI_FONT)}>
      <Desktop />
      <Explorer />
      <div className="pointer-events-none absolute left-[432px] top-[2px] flex items-baseline whitespace-nowrap font-['DejaVu_Sans',sans-serif] text-[12px] font-bold leading-4 text-[#eaf4fc] [text-shadow:0_0_2px_#223,0_0_2px_#223,1px_1px_2px_#223]">
        www.<span className="text-[14px]">BANDICAM</span><span className="text-[#f0b03a]">.</span>COM
      </div>
      <svg viewBox="0 0 12 18" className="pointer-events-none absolute left-[533px] top-[117px] h-[12px] w-2" aria-hidden="true">
        <path d="M1 1v14l3.500-3 2.500 5 2-1-2.500-5H11z" fill="#fff" stroke="#222" />
      </svg>
    </div>
  )
}
